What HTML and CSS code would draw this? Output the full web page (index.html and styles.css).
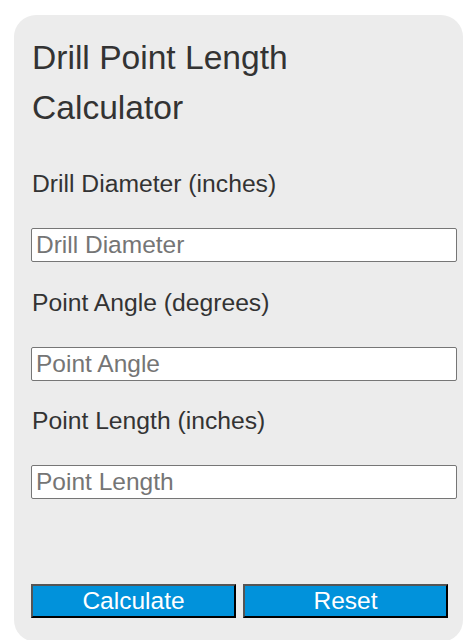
FILE: index.html
```html
<!DOCTYPE html>
<html lang="en">
<head>
<meta charset="utf-8">
<title>Drill Point Length Calculator</title>
<link rel="stylesheet" href="styles.css">
</head>
<body>
<div class="card">
  <h1 class="title">Drill Point Length Calculator</h1>
  <div class="field">
    <label class="label" for="d">Drill Diameter (inches)</label>
    <input class="input" id="d" type="text" placeholder="Drill Diameter">
  </div>
  <div class="field">
    <label class="label" for="a">Point Angle (degrees)</label>
    <input class="input" id="a" type="text" placeholder="Point Angle">
  </div>
  <div class="field">
    <label class="label" for="l">Point Length (inches)</label>
    <input class="input" id="l" type="text" placeholder="Point Length">
  </div>
  <div class="buttons">
    <button class="btn" type="button">Calculate</button>
    <button class="btn" type="button">Reset</button>
  </div>
</div>
</body>
</html>
```

FILE: styles.css
```css
html, body {
  margin: 0;
  padding: 0;
  background: #ffffff;
}
body {
  font-family: "Liberation Sans", Arial, sans-serif;
  color: #333333;
}
.card {
  box-sizing: border-box;
  width: 449px;
  height: 627px;
  margin: 15px 0 0 14px;
  padding: 18px 0 0 17px;
  background: #ececec;
  border-radius: 22px;
}
.title {
  max-width: 320px;
  margin: 0 0 37px 1px;
  font-size: 33.6px;
  font-weight: normal;
  line-height: 50px;
  color: #333333;
}
.field {
  display: flex;
  flex-direction: column;
  align-items: flex-start;
  margin-bottom: 26.5px;
}
.label {
  display: block;
  margin: 0 0 30px 1px;
  font-size: 24.7px;
  line-height: 28px;
}
.input {
  box-sizing: border-box;
  width: 426px;
  height: 34px;
  margin: 0;
  padding: 1px 4px;
  font-family: "Liberation Sans", Arial, sans-serif;
  font-size: 24.5px;
  color: #333333;
  background: #ffffff;
  border: 1px solid #767676;
  border-radius: 2px;
}
.input::placeholder {
  color: #757575;
}
.buttons {
  display: flex;
  gap: 7px;
  margin-top: 85px;
}
.btn {
  box-sizing: border-box;
  width: 205px;
  height: 34px;
  margin: 0;
  padding: 0;
  font-family: "Liberation Sans", Arial, sans-serif;
  font-size: 24.5px;
  line-height: 28px;
  color: #ffffff;
  background: #0192db;
  border-style: solid;
  border-width: 2px;
  border-color: #555555 #000000 #000000 #555555;
  border-radius: 0;
}
```
